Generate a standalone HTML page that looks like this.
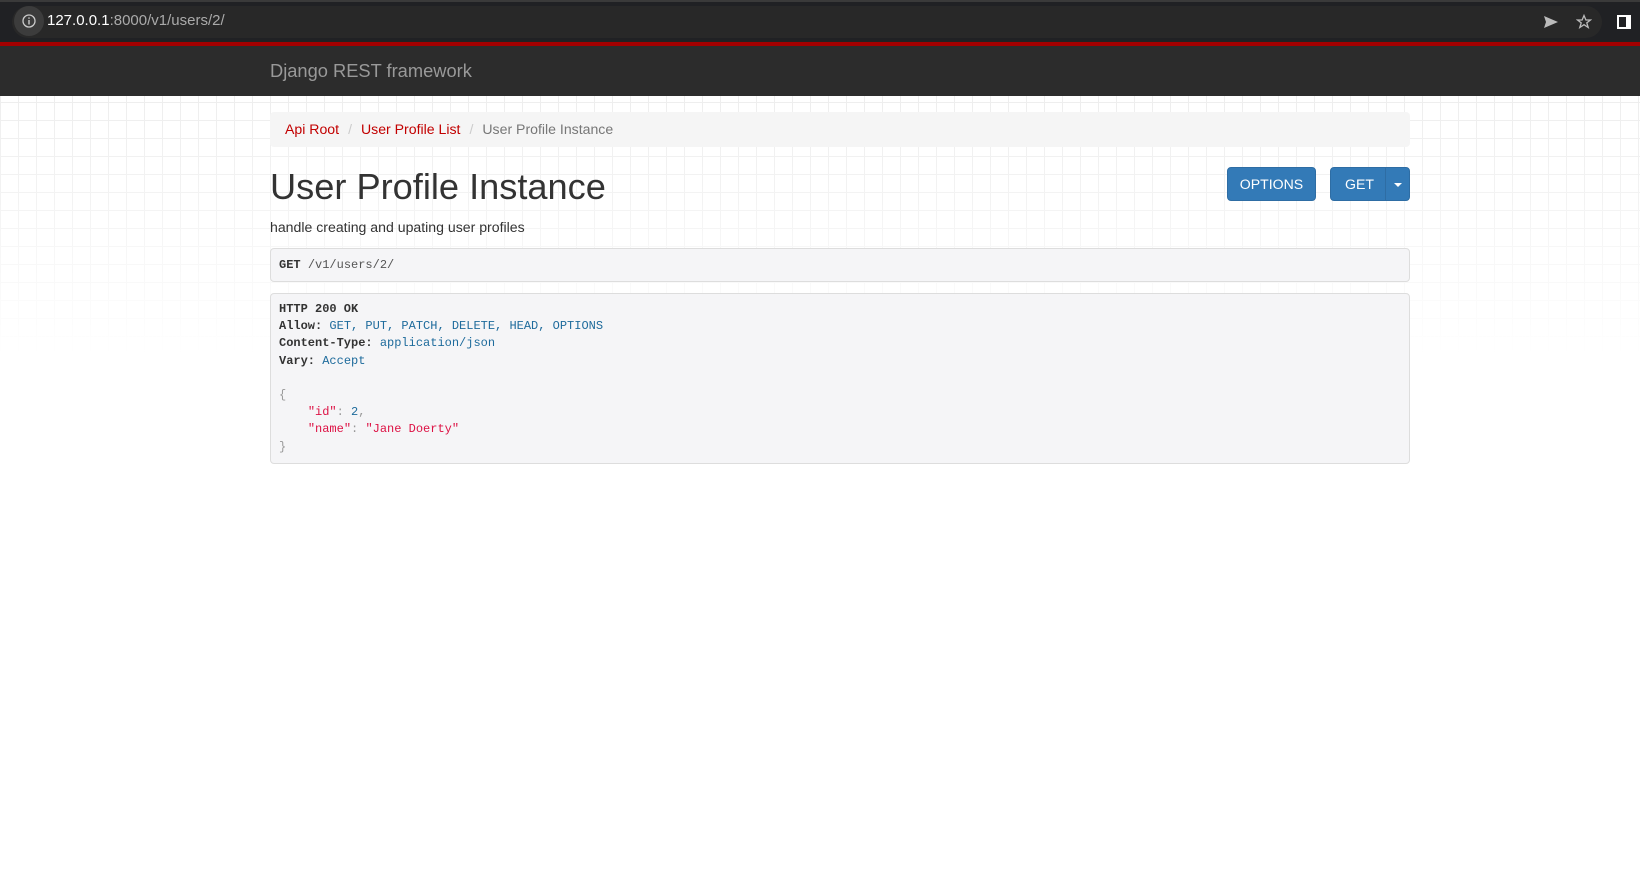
<!DOCTYPE html>
<html><head><meta charset="utf-8"><style>
*{box-sizing:border-box;margin:0;padding:0}
body{width:1640px;height:871px;overflow:hidden;background:#fff;font-family:"Liberation Sans",sans-serif;font-size:14px;color:#333;position:relative}
.chrome{position:absolute;left:0;top:0;width:1640px;height:41px;background:#202124;border-top:2px solid #3a3a3a}
.omni{position:absolute;left:12px;top:4px;width:1590px;height:32px;background:#282828;border-radius:16px}
.info{position:absolute;left:14px;top:4px;width:30px;height:30px;border-radius:15px;background:#3c3c3c}
.url{position:absolute;left:47px;top:10px;font-size:15px;color:#aaa}
.url b{color:#fff;font-weight:normal}
.red{position:absolute;left:0;top:41px;width:1640px;height:5px;background:#a30000;border-top:1px solid #222}
.nav{position:absolute;left:0;top:46px;width:1640px;height:50px;background:#2c2c2c}
.brand{position:absolute;left:270px;top:14px;font-size:18.3px;color:#999}
.grid{position:absolute;left:0;top:96px;width:1640px;height:260px;background-image:linear-gradient(#eee 1px,transparent 1px),linear-gradient(90deg,#eee 1px,transparent 1px);background-size:18px 18px;background-position:0 6px}
.fade{position:absolute;left:0;top:96px;width:1640px;height:260px;background:linear-gradient(rgba(255,255,255,0) 0%,rgba(255,255,255,.3) 40%,#fff 100%)}
.bc{position:absolute;left:270px;top:112px;width:1140px;height:35px;background:#f5f5f5;border-radius:4px;padding:9px 15px;font-size:14.1px}
.bc a{color:#c20000;text-decoration:none}
.bc .s{color:#ccc;padding:0 9px}
.bc .c{color:#777}
h1{position:absolute;left:270px;top:166px;font-size:36.2px;font-weight:normal;color:#333}
.btn{position:absolute;top:167px;height:34px;background:#337ab7;border:1px solid #2e6da4;border-radius:4px;color:#fff;font-size:14.1px;line-height:33px;text-align:center}
.desc{position:absolute;left:270px;top:219px;font-size:14.1px}
pre{font-family:"Liberation Mono",monospace;font-size:12px;line-height:17.2px;color:#333}
.box{position:absolute;left:270px;width:1140px;background:#f5f5f7;border:1px solid #ddd;border-radius:4px;padding:0 8px}
.k{color:#333;font-weight:bold}.v{color:#1e6b9c}.p{color:#999}.str{color:#dd1144}
</style></head><body>
<div class="chrome"><div class="omni"></div><div class="info"></div>
<svg style="position:absolute;left:22px;top:12px" width="14" height="14" viewBox="0 0 14 14"><circle cx="7" cy="7" r="6" fill="none" stroke="#ccc" stroke-width="1.3"/><rect x="6.3" y="6" width="1.4" height="4.5" fill="#ccc"/><rect x="6.3" y="3.4" width="1.4" height="1.4" fill="#ccc"/></svg>
<div class="url"><b>127.0.0.1</b>:8000/v1/users/2/</div>
<svg style="position:absolute;left:1543px;top:13px" width="16" height="14" viewBox="0 0 16 14"><path d="M1 1L15 7L1 13L3 7Z" fill="#bbb"/></svg>
<svg style="position:absolute;left:1576px;top:12px" width="16" height="16" viewBox="0 0 16 16"><path d="M8 1.5L9.9 6H14.5L10.8 8.9L12.2 13.5L8 10.7L3.8 13.5L5.2 8.9L1.5 6H6.1Z" fill="none" stroke="#bbb" stroke-width="1.3"/></svg>
<div style="position:absolute;left:1617px;top:13px;width:14px;height:14px;border:2px solid #fff;border-right-width:5px"></div>
</div>
<div class="red"></div>
<div class="nav"><div class="brand">Django REST framework</div></div>
<div class="grid"></div><div class="fade"></div>
<div class="bc"><a>Api Root</a><span class="s">/</span><a>User Profile List</a><span class="s">/</span><span class="c">User Profile Instance</span></div>
<h1>User Profile Instance</h1>
<div class="btn" style="left:1227px;width:89px">OPTIONS</div>
<div class="btn" style="left:1330px;width:80px;text-align:left;padding-left:14px">GET<span style="position:absolute;left:54px;top:0;bottom:0;border-left:1px solid #2e6da4"></span><span style="position:absolute;left:63px;top:15px;border-left:4px solid transparent;border-right:4px solid transparent;border-top:4px solid #fff"></span></div>
<div class="desc">handle creating and upating user profiles</div>
<div class="box" style="top:248px;height:34px;padding-top:8px"><pre><span class="k">GET</span> <span style="color:#555">/v1/users/2/</span></pre></div>
<div class="box" style="top:293px;height:171px;padding-top:7px"><pre><span class="k">HTTP 200 OK</span>
<span class="k">Allow:</span> <span class="v">GET, PUT, PATCH, DELETE, HEAD, OPTIONS</span>
<span class="k">Content-Type:</span> <span class="v">application/json</span>
<span class="k">Vary:</span> <span class="v">Accept</span>

<span class="p">{</span>
    <span class="str">"id"</span><span class="p">:</span> <span class="v">2</span><span class="p">,</span>
    <span class="str">"name"</span><span class="p">:</span> <span class="str">"Jane Doerty"</span>
<span class="p">}</span></pre></div>
</body></html>
